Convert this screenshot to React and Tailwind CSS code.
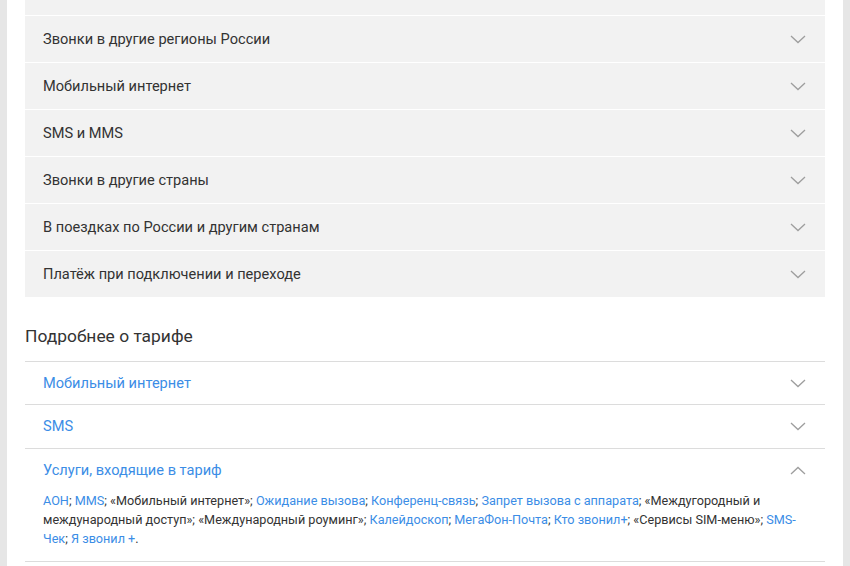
import React from 'react';

const topRows = [
  'Звонки внутри домашнего региона',
  'Звонки в другие регионы России',
  'Мобильный интернет',
  'SMS и MMS',
  'Звонки в другие страны',
  'В поездках по России и другим странам',
  'Платёж при подключении и переходе',
];

function Chevron({ up }) {
  return (
    <svg width="16" height="9" viewBox="0 0 16 9" fill="none" className="shrink-0">
      <polyline
        points={up ? '1,8 8,1.5 15,8' : '1,1 8,7.5 15,1'}
        stroke="#9e9e9e"
        strokeWidth="1.3"
        fill="none"
      />
    </svg>
  );
}

const L = ({ children }) => <span className="text-[#3b8de6]">{children}</span>;

export default function App() {
  return (
    <div
      className="h-[566px] overflow-hidden bg-[#e6e6e6] px-[7px]"
      style={{ fontFamily: 'Roboto, "Noto Sans", sans-serif' }}
    >
      <div className="h-full overflow-hidden bg-white px-[18px]">
        {/* tariff parameters */}
        <div className="flex flex-col gap-px -mt-[31px]">
          {topRows.map((t) => (
            <div
              key={t}
              className="flex h-[46px] items-center justify-between bg-[#f2f2f2] pl-[18px] pr-[19px] text-[14.6px] text-[#333]"
            >
              <span className="pt-[2px]">{t}</span>
              <Chevron />
            </div>
          ))}
        </div>

        <h2 className="pt-[28px] pb-[14px] text-[17.4px] leading-[22px] text-[#333]">Подробнее о тарифе</h2>

        <div className="border-t border-[#dcdcdc]">
          <div className="flex h-[43px] items-center justify-between border-b border-[#dcdcdc] pl-[18px] pr-[19px] text-[14.6px] text-[#3b8de6]">
            <span className="pt-[2px]">Мобильный интернет</span>
            <Chevron />
          </div>
          <div className="flex h-[44px] items-center justify-between border-b border-[#dcdcdc] pl-[18px] pr-[19px] text-[14.6px] text-[#3b8de6]">
            <span>SMS</span>
            <Chevron />
          </div>
          <div className="border-b border-[#dcdcdc] pl-[18px] pr-[19px] pb-[13px]">
            <div className="flex h-[42px] items-center justify-between text-[14.6px] text-[#3b8de6]">
              <span className="pt-[2px]">Услуги, входящие в тариф</span>
              <Chevron up />
            </div>
            <p className="text-[12.65px] leading-[19px] text-[#333]">
              <L>АОН</L>; <L>MMS</L>; «Мобильный интернет»; <L>Ожидание вызова</L>; <L>Конференц-связь</L>;{' '}
              <L>Запрет вызова с аппарата</L>; «Междугородный и международный доступ»; «Международный роуминг»;{' '}
              <L>Калейдоскоп</L>; <L>МегаФон-Почта</L>; <L>Кто звонил+</L>; «Сервисы SIM-меню»; <L>SMS-Чек</L>;{' '}
              <L>Я звонил +</L>.
            </p>
          </div>
        </div>
      </div>
    </div>
  );
}
